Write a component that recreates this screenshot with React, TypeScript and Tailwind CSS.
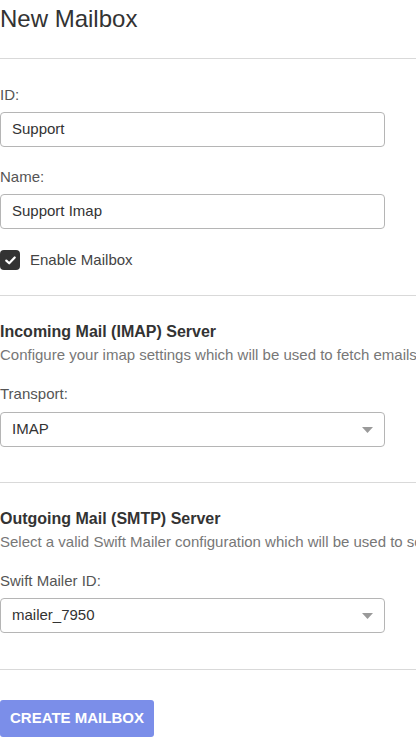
import React from "react";

function Caret() {
  return (
    <svg width="11" height="6" viewBox="0 0 11 6" className="shrink-0">
      <path d="M0 0 L11 0 L5.5 6 Z" fill="#9a9a9a" />
    </svg>
  );
}

function Label({ children, className = "" }: { children: React.ReactNode; className?: string }) {
  return <div className={`text-[15px] leading-[20px] text-[#555] ${className}`}>{children}</div>;
}

function TextInput({ value, className = "" }: { value: string; className?: string }) {
  return (
    <div
      className={`w-[385px] h-[35px] border border-[#b5b5b5] rounded-[4px] flex items-center pl-[11px] text-[15px] text-[#333] ${className}`}
    >
      {value}
    </div>
  );
}

function SelectBox({ value, className = "" }: { value: string; className?: string }) {
  return (
    <div
      className={`w-[385px] h-[35px] border border-[#b5b5b5] rounded-[4px] flex items-center justify-between pl-[11px] pr-[11px] text-[15px] text-[#333] ${className}`}
    >
      <span>{value}</span>
      <Caret />
    </div>
  );
}

export default function App() {
  return (
    <div className="w-[416px] h-[752px] bg-white overflow-hidden font-['Liberation_Sans',Arial,sans-serif] text-[#333]">
      <h1 className="text-[24px] leading-[26px] pt-[6px] h-[58px] text-[#333] font-normal">New Mailbox</h1>
      <div className="h-px bg-[#d9d9d9]" />

      <Label className="mt-[26px]">ID:</Label>
      <TextInput value="Support" className="mt-[7px]" />

      <Label className="mt-[20px]">Name:</Label>
      <TextInput value="Support Imap" className="mt-[7px]" />

      <div className="mt-[21px] h-[20px] flex items-center gap-[10px]">
        <div className="w-[20px] h-[20px] rounded-[4px] bg-[#333] flex items-center justify-center">
          <svg width="11" height="9" viewBox="0 0 11 9">
            <path d="M1.3 4.6 L4.2 7.3 L9.7 1.5" fill="none" stroke="#fff" strokeWidth="2.2" strokeLinecap="round" strokeLinejoin="round" />
          </svg>
        </div>
        <span className="text-[15px] leading-[20px] text-[#444]">Enable Mailbox</span>
      </div>

      <div className="mt-[25px] h-px bg-[#d9d9d9]" />

      <div className="mt-[26px] text-[16px] leading-[20px] font-bold text-[#333]">Incoming Mail (IMAP) Server</div>
      <div className="mt-[3px] text-[15px] leading-[20px] text-[#777] whitespace-nowrap overflow-hidden">
        Configure your imap settings which will be used to fetch emails
      </div>

      <Label className="mt-[19px]">Transport:</Label>
      <SelectBox value="IMAP" className="mt-[8px]" />

      <div className="mt-[35px] h-px bg-[#d9d9d9]" />

      <div className="mt-[26px] text-[16px] leading-[20px] font-bold text-[#333]">Outgoing Mail (SMTP) Server</div>
      <div className="mt-[3px] text-[15px] leading-[20px] text-[#777] whitespace-nowrap overflow-hidden">
        Select a valid Swift Mailer configuration which will be used to send emails
      </div>

      <Label className="mt-[19px]">Swift Mailer ID:</Label>
      <SelectBox value="mailer_7950" className="mt-[7px]" />

      <div className="mt-[36px] h-px bg-[#d9d9d9]" />

      <button className="mt-[30px] h-[37px] px-[10px] rounded-[3px] bg-[#7b8ee9] text-white text-[15px] font-bold flex items-center">
        CREATE MAILBOX
      </button>
    </div>
  );
}
